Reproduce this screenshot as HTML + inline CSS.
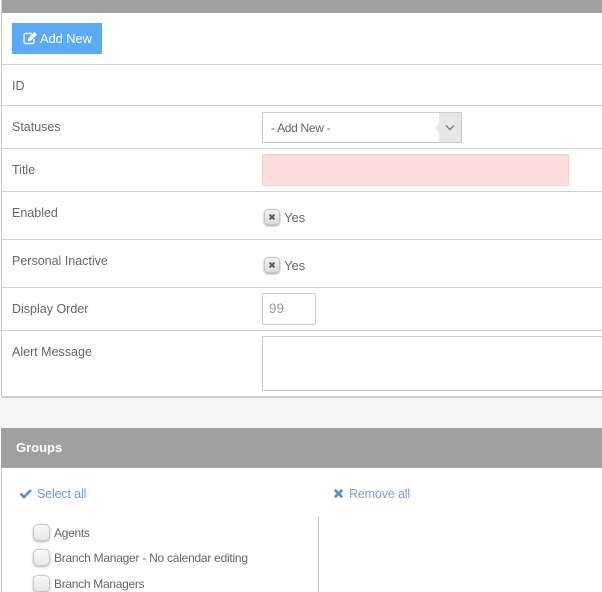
<!DOCTYPE html>
<html><head><meta charset="utf-8">
<style>
html,body{margin:0;padding:0;background:#fff}
body{width:602px;height:592px;position:relative;overflow:hidden;font-family:"Liberation Sans",sans-serif;font-size:12.5px;color:#666}
.a{position:absolute}
.hl{position:absolute;left:2px;right:0;height:1px;background:#cfcfcf}
.t{position:absolute;white-space:nowrap;line-height:16px}
.cb{position:absolute;width:14px;height:14px;border:1px solid #c4c4c4;border-radius:4px;background:linear-gradient(#f2f2f2,#dedede);box-shadow:0 1px 2px rgba(0,0,0,.35)}
.cb2{position:absolute;width:15px;height:15px;border:1px solid #c8c8c8;border-radius:5px;background:linear-gradient(#f8f8f8,#e8e8e8);box-shadow:0 1px 2px rgba(0,0,0,.3)}
</style></head><body>
<div class="a" style="left:1px;top:0;width:601px;height:13px;background:#a0a0a0"></div>
<div class="a" style="left:1px;top:0;width:1px;height:398px;background:#cfcfcf"></div>
<div class="a" style="left:12px;top:23px;width:90px;height:31px;background:#5aaaf7"></div>
<svg class="a" style="left:23px;top:31px" width="15" height="14" viewBox="0 0 15 14"><path d="M11 8v3a1.500 1.500 0 0 1-1.500 1.500h-7A1.500 1.500 0 0 1 1 11V4a1.500 1.500 0 0 1 1.500-1.500H9" fill="none" stroke="#fff" stroke-width="1.400"/><path d="M5 7.500 11.500 1 14 3.500 7.500 10H5z" fill="#fff"/></svg>
<div class="t" style="left:40px;top:31px;color:#fff;font-size:13px;letter-spacing:-.15px">Add New</div>

<div class="hl" style="top:64px"></div>
<div class="hl" style="top:105px"></div>
<div class="hl" style="top:148px"></div>
<div class="hl" style="top:191px"></div>
<div class="hl" style="top:239px"></div>
<div class="hl" style="top:287px"></div>
<div class="hl" style="top:330px"></div>
<div class="a" style="left:1px;right:0;top:396px;height:2px;background:#cfcfcf"></div>

<div class="t" style="left:12px;top:78px">ID</div>
<div class="t" style="left:12px;top:119px">Statuses</div>
<div class="t" style="left:12px;top:162px">Title</div>
<div class="t" style="left:12px;top:205px">Enabled</div>
<div class="t" style="left:12px;top:253px">Personal Inactive</div>
<div class="t" style="left:12px;top:301px">Display Order</div>
<div class="t" style="left:12px;top:344px">Alert Message</div>

<div class="a" style="left:262px;top:112px;width:198px;height:29px;border:1px solid #ccc;background:#fff"></div>
<div class="a" style="left:439px;top:113px;width:22px;height:29px;background:#e6e6e6"></div>
<div class="a" style="left:435px;top:123px;width:0;height:0;border-style:solid;border-width:5px 4px 5px 0;border-color:transparent #e6e6e6 transparent transparent"></div>
<svg class="a" style="left:445px;top:124px" width="10" height="7" viewBox="0 0 10 7"><path d="M1 1.500 5 5.500 9 1.500" fill="none" stroke="#777" stroke-width="1.300"/></svg>
<div class="t" style="left:271px;top:120px;font-size:12px;letter-spacing:-.3px">- Add New -</div>

<div class="a" style="left:262px;top:154px;width:305px;height:30px;border:1px solid #f1d0d0;border-radius:2px;background:#fedddd"></div>

<div class="cb" style="left:264px;top:209px"></div>
<svg class="a" style="left:268px;top:213px" width="8" height="8" viewBox="0 0 8 8"><path d="M1.500 1.500 6.500 6.500M6.500 1.500 1.500 6.500" stroke="#555" stroke-width="1.900"/></svg>
<div class="t" style="left:284px;top:210px;font-size:13px">Yes</div>
<div class="cb" style="left:264px;top:257px"></div>
<svg class="a" style="left:268px;top:261px" width="8" height="8" viewBox="0 0 8 8"><path d="M1.500 1.500 6.500 6.500M6.500 1.500 1.500 6.500" stroke="#555" stroke-width="1.900"/></svg>
<div class="t" style="left:284px;top:258px;font-size:13px">Yes</div>

<div class="a" style="left:262px;top:293px;width:52px;height:30px;border:1px solid #ccc;border-radius:2px;background:#fff"></div>
<div class="t" style="left:269px;top:301px;color:#999;font-size:13.500px">99</div>
<div class="a" style="left:262px;top:336px;width:350px;height:53px;border:1px solid #ccc;background:#fff"></div>

<div class="a" style="left:0;top:398px;width:602px;height:30px;background:#f5f5f5"></div>
<div class="a" style="left:1px;top:428px;width:601px;height:40px;background:#a0a0a0"></div>
<div class="t" style="left:16px;top:440px;color:#fff;font-weight:bold;font-size:13px">Groups</div>
<div class="a" style="left:1px;top:468px;width:1px;height:124px;background:#cfcfcf"></div>

<svg class="a" style="left:19px;top:488px" width="14" height="11" viewBox="0 0 14 11"><path d="M1.500 5.500 5 9 12 2" fill="none" stroke="#5b8fc7" stroke-width="2.600"/></svg>
<div class="t" style="left:37px;top:486px;color:#6f9bc9;letter-spacing:-.15px">Select all</div>
<svg class="a" style="left:333px;top:488px" width="11" height="11" viewBox="0 0 11 11"><path d="M1.800 1.800 9.200 9.200M9.200 1.800 1.800 9.200" stroke="#5b8fc7" stroke-width="2.800"/></svg>
<div class="t" style="left:349px;top:486px;color:#7f9fc6;letter-spacing:-.15px">Remove all</div>

<div class="a" style="left:318px;top:516px;width:1px;height:76px;background:#c8c8c8"></div>

<div class="cb2" style="left:33px;top:524px"></div>
<div class="t" style="left:54px;top:525px;font-size:12px;letter-spacing:-.3px">Agents</div>
<div class="cb2" style="left:33px;top:549px"></div>
<div class="t" style="left:54px;top:550px;font-size:12px;letter-spacing:-.25px">Branch Manager - No calendar editing</div>
<div class="cb2" style="left:33px;top:575px"></div>
<div class="t" style="left:54px;top:576px;font-size:12px;letter-spacing:-.3px">Branch Managers</div>
</body></html>
